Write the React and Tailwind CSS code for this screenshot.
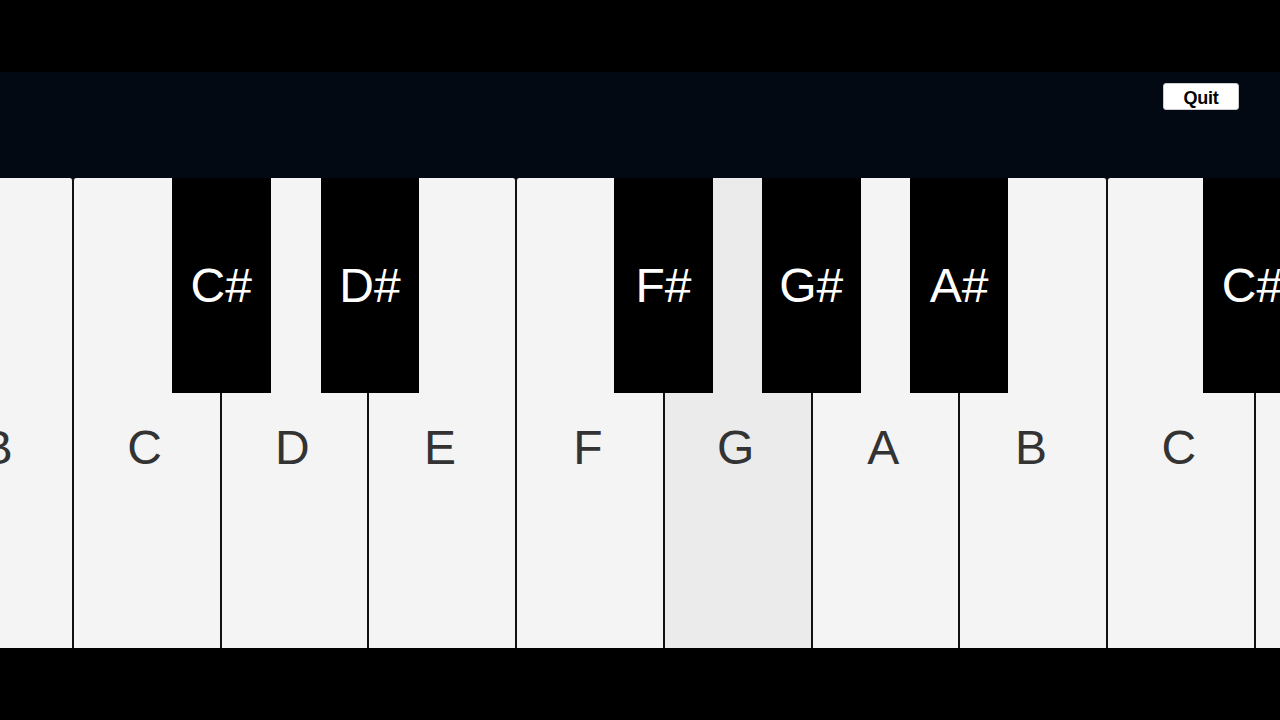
const whiteKeys = [
  { note: 'B' },
  { note: 'C', sharp: 'C#', offset: 'right-[-51px]' },
  { note: 'D', sharp: 'D#', offset: 'right-[-52px]' },
  { note: 'E' },
  { note: 'F', sharp: 'F#', offset: 'right-[-50px]' },
  { note: 'G', sharp: 'G#', offset: 'right-[-50px]', pressed: true },
  { note: 'A', sharp: 'A#', offset: 'right-[-50px]' },
  { note: 'B' },
  { note: 'C', sharp: 'C#', offset: 'right-[-48px]' },
  { note: 'D', sharp: 'D#', offset: 'right-[-52px]' },
]

function WhiteKey({ note, sharp, offset, pressed }) {
  return (
    <div
      className={
        'relative h-full w-[147.75px] shrink-0 rounded-t-[3px] border-x border-[#111] flex justify-center pt-[246px] pr-[4px] ' +
        (pressed ? 'bg-[#ebebeb]' : 'bg-[#f4f4f4]')
      }
    >
      <span className="text-[48px] leading-[48px] text-[#333]">{note}</span>
      {sharp && (
        <div className={'absolute top-0 z-10 h-[215px] w-[98.5px] bg-black flex items-center justify-center ' + offset}>
          <span className="text-[48px] leading-[48px] text-white">{sharp}</span>
        </div>
      )}
    </div>
  )
}

export default function App() {
  return (
    <div className="h-[720px] w-[1280px] overflow-hidden bg-black flex flex-col font-['Liberation_Sans',Arial,sans-serif]">
      <div className="h-[72px] shrink-0" />
      <div className="h-[106px] shrink-0 bg-[#020913] flex justify-end items-start pt-[11px] pr-[41px]">
        <button className="h-[27px] w-[76px] rounded-[3px] border border-[#ccc] bg-white text-black text-[18px] leading-[18px] font-bold tracking-[-0.3px] flex items-center justify-center pt-[2px]">
          Quit
        </button>
      </div>
      <div className="h-[470px] shrink-0 bg-[#020913] overflow-hidden">
        <div className="flex h-full ml-[-75px]">
          {whiteKeys.map((k, i) => (
            <WhiteKey key={i} {...k} />
          ))}
        </div>
      </div>
      <div className="flex-1" />
    </div>
  )
}
